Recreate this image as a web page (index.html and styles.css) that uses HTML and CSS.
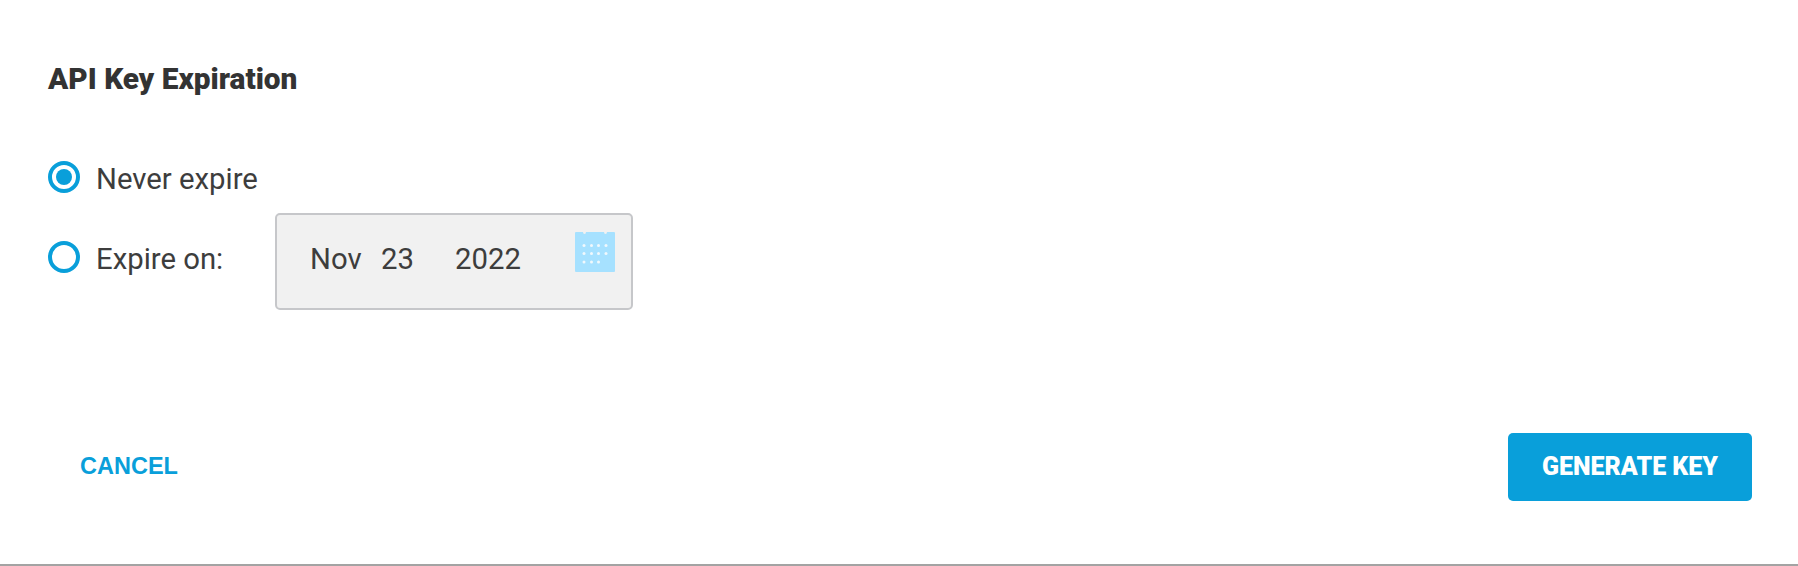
FILE: index.html
```html
<!DOCTYPE html>
<html lang="en">
<head>
<meta charset="utf-8">
<title>API Key Expiration</title>
<link rel="stylesheet" href="styles.css">
</head>
<body>
<div class="dialog">
  <h1 class="title">API Key Expiration</h1>
  <div class="options">
    <label class="option option-never">
      <span class="radio radio-on"></span>
      <span class="label">Never expire</span>
    </label>
    <div class="option option-date">
      <span class="radio"></span>
      <span class="label label-on">Expire on:</span>
      <div class="date">
        <span class="date-month">Nov</span>
        <span class="date-day">23</span>
        <span class="date-year">2022</span>
        <svg class="cal" viewBox="0 0 40 40" aria-hidden="true">
          <path class="cal-bg" d="M1 0H8a1.500 2 0 0 0 3 0H29a1.500 2 0 0 0 3 0H39a1 1 0 0 1 1 1V39a1 1 0 0 1-1 1H1a1 1 0 0 1-1-1V1a1 1 0 0 1 1-1z"/>
          <g class="cal-dots">
            <circle cx="9" cy="13.500" r="1.500"/><circle cx="16.500" cy="13.500" r="1.500"/><circle cx="23.500" cy="13.500" r="1.500"/><circle cx="31" cy="13.500" r="1.500"/>
            <circle cx="9" cy="21.500" r="1.500"/><circle cx="16.500" cy="21.500" r="1.500"/><circle cx="23.500" cy="21.500" r="1.500"/><circle cx="31" cy="21.500" r="1.500"/>
            <circle cx="9" cy="30" r="1.500"/><circle cx="16.500" cy="30" r="1.500"/><circle cx="23.500" cy="30" r="1.500"/>
          </g>
        </svg>
      </div>
    </div>
  </div>
  <div class="actions">
    <button class="btn-cancel" type="button">CANCEL</button>
    <button class="btn-primary" type="button">GENERATE KEY</button>
  </div>
</div>
</body>
</html>
```
FILE: styles.css
```css
* { box-sizing: border-box; }
html, body { margin: 0; padding: 0; background: #fff; }
body { width: 1798px; height: 566px; overflow: hidden; font-family: Roboto, "Liberation Sans", sans-serif; color: #333; }
.dialog { height: 566px; padding: 63px 46px 0 48px; border-bottom: 2px solid #a3a3a3; display: flex; flex-direction: column; }
.title { margin: 0; font-size: 29.800px; line-height: 32px; font-weight: 900; color: #333; }
.options { margin-top: 57px; display: flex; flex-direction: column; }
.option { display: flex; align-items: center; }
.option-never { height: 50px; margin-bottom: 11px; }
.option-never .label { margin-top: 4px; }
.option-date .radio { margin-bottom: 9px; }
.option-date .label { margin-bottom: 5px; }
.radio { width: 32px; height: 32px; border: 4px solid #099fda; border-radius: 50%; display: flex; align-items: center; justify-content: center; flex: none; }
.radio-on::before { content: ""; width: 16px; height: 16px; border-radius: 50%; background: #099fda; }
.label { margin-left: 16px; font-size: 29.300px; line-height: 32px; color: #3d3d3d; }
.label-on { width: 179px; }
.date { width: 358px; height: 97px; border: 2px solid #c6c7ca; border-radius: 5px; background: #f1f1f1; display: flex; align-items: center; font-size: 29.300px; color: #3d3d3d; padding: 0 0 5px 33px; position: relative; }
.date-month { width: 71px; }
.date-day { width: 74px; }
.cal { position: absolute; right: 16px; top: 17px; width: 40px; height: 40px; }
.cal-bg { fill: #a6e1ff; }
.cal-dots { fill: #f1f8fc; }
.actions { margin-top: 123px; display: flex; justify-content: space-between; align-items: center; }
button { border: 0; padding: 0; cursor: pointer; background: none; }
.btn-cancel { margin: 0 0 2px 32px; font-family: "Liberation Sans", Arial, sans-serif; font-size: 23.500px; font-weight: 700; color: #099fda; }
.btn-primary { width: 244px; height: 68px; padding-bottom: 2px; border-radius: 5px; background: #099fda; color: #fff; font-family: Roboto, sans-serif; font-size: 25px; font-weight: 900; }
```
